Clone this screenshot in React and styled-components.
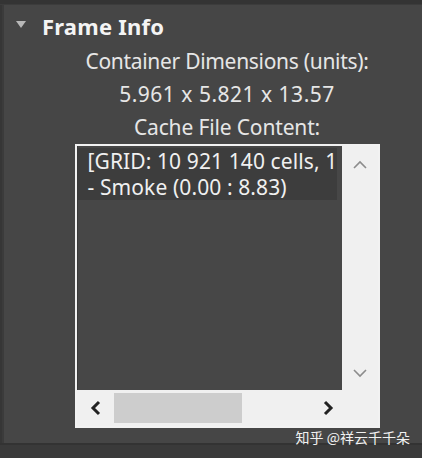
import React from "react";
import styled, { createGlobalStyle } from "styled-components";

const GlobalStyle = createGlobalStyle`
  body {
    margin: 0;
    background: #3a3a3a;
    font-family: "Noto Sans", "Open Sans", sans-serif;
  }
`;

const Screen = styled.div`
  width: 422px;
  height: 458px;
  display: flex;
  flex-direction: column;
  background: #363636;
  overflow: hidden;
`;

const TopStrip = styled.div`
  height: 4px;
  background: #343434;
  border-bottom: 1px solid #3c3c3c;
`;

const Panel = styled.div`
  flex: 1;
  margin-left: 2px;
  border-left: 2px solid #3b3b3b;
  background: #464646;
  display: flex;
  flex-direction: column;
  position: relative;
`;

const Header = styled.div`
  display: flex;
  align-items: center;
  gap: 16px;
  height: 40px;
  padding: 1px 0 0 12px;
  box-sizing: border-box;
`;

const Triangle = styled.span`
  width: 0;
  height: 0;
  border-left: 5px solid transparent;
  border-right: 5px solid transparent;
  border-top: 7px solid #b8b8b8;
  margin-top: -2px;
`;

const Title = styled.span`
  color: #f4f4f4;
  font-weight: bold;
  font-size: 22px;
  letter-spacing: 0.2px;
`;

const Body = styled.div`
  display: flex;
  flex-direction: column;
  align-items: center;
  padding-left: 28px;
`;

const InfoLine = styled.div`
  color: #e6e6e6;
  font-size: 21px;
  line-height: 33px;
  letter-spacing: ${(p) => p.$spacing ?? -0.3}px;
  white-space: nowrap;
`;

const ListBox = styled.div`
  position: relative;
  z-index: 1;
  width: 301px;
  height: 280px;
  border: 2px solid #f2f2f2;
  display: grid;
  grid-template-columns: 1fr 36px;
  grid-template-rows: 1fr 36px;
  background: #474747;
`;

const ListContent = styled.div`
  background: #474747;
  border-left: 1px solid #3a3a3a;
  padding: 2px 0 0 0;
  overflow: hidden;
`;

const Row = styled.div`
  background: #3d3d3d;
  width: 259px;
  color: #f0f0f0;
  font-size: 21px;
  line-height: 26px;
  padding-left: 10px;
  white-space: nowrap;
  overflow: hidden;
  letter-spacing: 0.1px;
  box-sizing: border-box;
`;

const VScroll = styled.div`
  background: #f0f0f0;
  display: flex;
  flex-direction: column;
  justify-content: space-between;
  align-items: center;
  padding: 12px 0 10px;
`;

const HScroll = styled.div`
  background: #f0f0f0;
  display: flex;
  align-items: center;
  padding: 0 7px 0 12px;
  gap: 11px;
`;

const Corner = styled.div`
  background: #f0f0f0;
`;

const Thumb = styled.div`
  width: 128px;
  height: 30px;
  background: #cdcdcd;
`;

const Spacer = styled.div`
  flex: 1;
`;

const Watermark = styled.div`
  position: absolute;
  right: 12px;
  bottom: -2px;
  z-index: 2;
  color: #f2f2f2;
  font-family: "Noto Sans CJK SC", "Noto Sans", sans-serif;
  font-size: 14px;
  line-height: 16px;
`;

const BottomStrip = styled.div`
  height: 13px;
  background: #3a3a3a;
  border-top: 2px solid #333333;
`;

const Chevron = ({ dir, color, w = 2 }) => {
  const paths = {
    up: "M2 10 L8 4 L14 10",
    down: "M2 4 L8 10 L14 4",
    left: "M10 2 L4 8 L10 14",
    right: "M4 2 L10 8 L4 14",
  };
  const vertical = dir === "up" || dir === "down";
  return (
    <svg width={vertical ? 16 : 14} height={vertical ? 14 : 16} viewBox={vertical ? "0 0 16 14" : "0 0 14 16"}>
      <path d={paths[dir]} fill="none" stroke={color} strokeWidth={w} />
    </svg>
  );
};

export default function App() {
  return (
    <Screen>
      <GlobalStyle />
      <TopStrip />
      <Panel>
        <Header>
          <Triangle />
          <Title>Frame Info</Title>
        </Header>
        <Body>
          <InfoLine>Container Dimensions (units):</InfoLine>
          <InfoLine $spacing={0.5}>5.961 x 5.821 x 13.57</InfoLine>
          <InfoLine $spacing={-0.15}>Cache File Content:</InfoLine>
          <ListBox>
            <ListContent>
              <Row>[GRID: 10 921 140 cells, 1</Row>
              <Row>- Smoke (0.00 : 8.83)</Row>
            </ListContent>
            <VScroll>
              <Chevron dir="up" color="#8c8c8c" w={1.6} />
              <Chevron dir="down" color="#8c8c8c" w={1.6} />
            </VScroll>
            <HScroll>
              <Chevron dir="left" color="#222" w={3} />
              <Thumb />
              <Spacer />
              <Chevron dir="right" color="#222" w={3} />
            </HScroll>
            <Corner />
          </ListBox>
        </Body>
        <Watermark>知乎 @祥云千千朵</Watermark>
      </Panel>
      <BottomStrip />
    </Screen>
  );
}
